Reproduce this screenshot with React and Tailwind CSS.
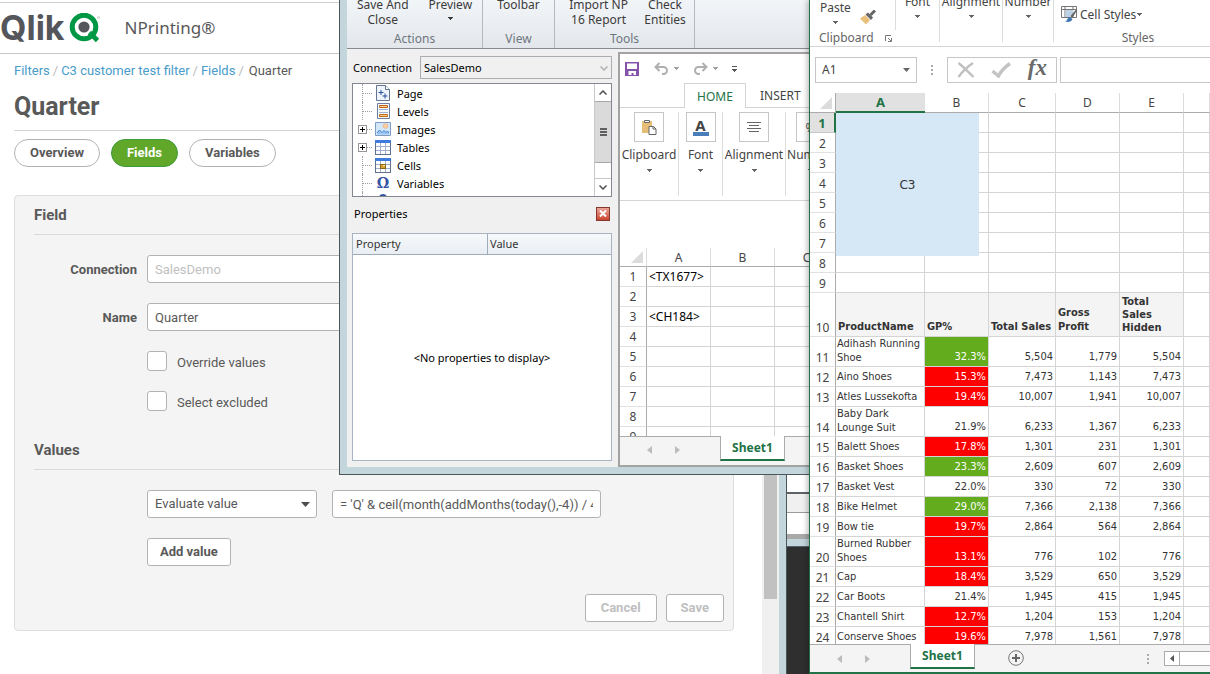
import React from "react";

const win = "font-['Noto_Sans','Open_Sans',sans-serif]";

function Caret({ className = "" }) {
  return (
    <svg viewBox="0 0 5 3" className={`h-[3px] w-[5px] shrink-0 ${className}`} shapeRendering="crispEdges" aria-hidden="true">
      <path d="M0 0h5L2.500 3z" fill="currentColor" />
    </svg>
  );
}

/* ---------------------------------------------------------------- NPrinting */

function QlikMark() {
  return (
    <svg viewBox="0 0 32 30" className="h-[30px] w-8" aria-hidden="true">
      <circle cx="15" cy="14" r="11.800" fill="#fff" stroke="#009845" strokeWidth="5" />
      <path d="M20.500 19.500L28.500 27.500" stroke="#009845" strokeWidth="4.600" />
      <circle cx="15" cy="14" r="5.600" fill="#54565b" />
      <circle cx="29.500" cy="4.500" r="1" fill="none" stroke="#999" strokeWidth="0.500" />
    </svg>
  );
}

const field = "h-7 rounded-[3px] border border-[#b3b3b3] bg-white px-[7px] text-[13px]";
const action = "h-7 rounded-[3px] border border-[#b3b3b3] bg-white text-[13px] font-bold";

function Pill({ active, children }) {
  return (
    <button
      className={`h-7 rounded-full border px-[15px] text-[13px] font-bold ${
        active ? "border-[#3f9a3a] bg-[#61a729] text-white" : "border-[#b3b3b3] bg-white text-[#595959]"
      }`}
    >
      {children}
    </button>
  );
}

function NPrinting() {
  return (
    <section className="absolute inset-y-0 left-0 flex w-[787px] border-r border-[#4d565c] bg-white font-[Roboto,sans-serif] text-[13px] text-[#595959]">
      <div className="mt-[2px] min-w-0 flex-1 border-t border-[#d0d0d0]">
        <header className="flex h-[51px] items-center border-b border-[#c8c8c8]">
          <span className="flex items-center gap-1">
            <span className="font-[Inter,sans-serif] text-[34px] leading-8 font-bold text-[#54565b]">Qlik</span>
            <QlikMark />
          </span>
          <span className="ml-6 font-['Noto_Sans',sans-serif] text-[17px]">NPrinting®</span>
        </header>
        <div className="pr-7 pl-[14px]">
          <nav className="flex h-[34px] items-center gap-[3px] text-[#4a9cc9]">
            <a href="#filters">Filters</a>
            <span className="text-[#bbb]">/</span>
            <a href="#filter">C3 customer test filter</a>
            <span className="text-[#bbb]">/</span>
            <a href="#fields">Fields</a>
            <span className="text-[#bbb]">/</span>
            <span className="ml-[2px] text-[#595959]">Quarter</span>
          </nav>
          <h1 className="flex h-[43px] items-center border-b border-[#d4d4d4] pb-1 text-[25px] font-bold">Quarter</h1>
          <div className="mt-2 flex gap-[11px]">
            <Pill>Overview</Pill>
            <Pill active>Fields</Pill>
            <Pill>Variables</Pill>
          </div>
          <form className="mt-7 h-[436px] rounded-[4px] border border-[#dedede] bg-[#f4f4f4] pr-[9px] pl-[19px]">
            <h2 className="mr-[11px] flex h-[39px] items-center border-b border-[#d9d9d9] text-[15px] font-bold">Field</h2>
            <div className="mt-5 flex items-center gap-[10px]">
              <label htmlFor="conn" className="w-[103px] pt-[2px] text-right font-bold">Connection</label>
              <input id="conn" disabled value="SalesDemo" readOnly className={`${field} w-[454px] text-[#bfbfbf]`} />
            </div>
            <div className="mt-5 flex items-center gap-[10px]">
              <label htmlFor="name" className="w-[103px] pt-[2px] text-right font-bold">Name</label>
              <input id="name" defaultValue="Quarter" className={`${field} w-[454px]`} />
            </div>
            <div className="mt-5 ml-[113px] flex flex-col gap-5">
              <label className="flex h-5 items-center gap-[10px]">
                <input type="checkbox" className="size-5 appearance-none rounded-[3px] border border-[#b3b3b3] bg-white" />
                <span className="pt-[3px]">Override values</span>
              </label>
              <label className="flex h-5 items-center gap-[10px]">
                <input type="checkbox" className="size-5 appearance-none rounded-[3px] border border-[#b3b3b3] bg-white" />
                <span className="pt-[3px]">Select excluded</span>
              </label>
            </div>
            <h2 className="mt-5 mr-[11px] flex h-[39px] items-center border-b border-[#d9d9d9] text-[15px] font-bold">Values</h2>
            <div className="mt-5 ml-[113px] flex gap-[15px]">
              <div className="relative">
                <select aria-label="Value type" className={`${field} w-[170px] appearance-none`}>
                  <option>Evaluate value</option>
                </select>
                <svg viewBox="0 0 9 5" className="pointer-events-none absolute top-3 right-[7px] h-[5px] w-[9px]" aria-hidden="true">
                  <path d="M0 0h9L4.500 5z" fill="#4d4d4d" />
                </svg>
              </div>
              <input aria-label="Expression" defaultValue="= 'Q' & ceil(month(addMonths(today(),-4)) / 4)" className={`${field} w-[269px]`} />
            </div>
            <button type="button" className={`${action} mt-5 ml-[113px] px-3`}>Add value</button>
            <div className="mt-7 flex justify-end gap-[9px] text-[#bfbfbf]">
              <button type="button" disabled className={`${action} px-[15px]`}>Cancel</button>
              <button type="button" disabled className={`${action} px-[14px]`}>Save</button>
            </div>
          </form>
        </div>
      </div>
      <div className="w-[17px] bg-[#f0f0f0] px-[2px]">
        <div className="h-[599px] bg-[#c1c1c1]" />
      </div>
      <div className="w-[7px] bg-[#c3d6dc]" />
    </section>
  );
}

function BackWindow() {
  return (
    <section className="absolute inset-y-0 left-[787px] flex w-6 flex-col bg-[#2f2f2f]" aria-hidden="true">
      <div className="h-[494px] border-b-2 border-[#5d6267] bg-white" />
      <div className="h-[19px] border-b border-[#9a9a9a] bg-[#f0f0f0]" />
      <div className="h-[21px] bg-white" />
      <div className="h-[5px] bg-[#a9a9a9]" />
      <div className="h-2 border-b border-[#55606a] bg-[#c3d6dc]" />
    </section>
  );
}

/* ----------------------------------------------------------------- Designer */

function RibbonGroup({ title, className, children }) {
  return (
    <div className={`flex shrink-0 flex-col justify-end border-r border-[#b4b9be] pb-[2px] text-center ${className}`}>
      <div className="flex items-start justify-around">{children}</div>
      <div className="mt-1 text-[#6e7680]">{title}</div>
    </div>
  );
}

function PageIcon() {
  return (
    <svg viewBox="0 0 14 16" className="h-4 w-[14px]">
      <path d="M.5.5h9l4 4v11H.5z" fill="#eef4fb" stroke="#64748e" />
      <path d="M9.500.5v4h4" fill="#fff" stroke="#64748e" />
      <path d="M5 5v5M2.500 7.500h5M9 8.500v5M6.500 11h5" stroke="#2d4d9d" />
    </svg>
  );
}
function LevelsIcon() {
  return (
    <svg viewBox="0 0 13 16" className="h-4 w-[13px]">
      <path d="M.5.5h12v15H.5z" fill="#f6f9fd" stroke="#6c7fa0" />
      <path d="M2.500 2.500h8v2h-8zM2.500 11.500h8v2h-8z" fill="#ffd28a" stroke="#c0661b" />
      <path d="M2 6.500h9M2 9.500h9" stroke="#9bb0cf" />
    </svg>
  );
}
function ImagesIcon() {
  return (
    <svg viewBox="0 0 16 14" className="h-[14px] w-4">
      <path d="M.5.5h15v13H.5z" fill="#d3e7fa" stroke="#7d9cc4" />
      <circle cx="10.500" cy="4" r="2.300" fill="#ffd2a8" stroke="#f0a36b" strokeWidth=".7" />
      <path d="M2 11l2.500-3 2.500 2.500L9 8.500l2 2 1.500-1.500 1.500 2v1.500H2z" fill="#9cc6ef" />
      <path d="M2 11l2.500-3 2.500 2.500L9 8.500l2 2 1.500-1.500 1.500 2" fill="none" stroke="#3f84cf" />
    </svg>
  );
}
function TableIcon({ cell }) {
  return (
    <svg viewBox="0 0 16 15" className="h-[15px] w-4" shapeRendering="crispEdges">
      <path d="M0 0h16v15H0z" fill="#5f7090" />
      <path d="M1 3h14v11H1z" fill="#fff" />
      <path d="M0 0h16v3H0z" fill="#3f7bdc" />
      <path d="M1 6.500h14M1 10.500h14M5.500 3v11M10.500 3v11" stroke="#9fb0cd" />
      {cell && <path d="M5 6h6v5H5z" fill="#8c6418" />}
      {cell && <path d="M6 7h4v3H6z" fill="#d9a032" />}
      {cell && <path d="M8 7h2v1H8z" fill="#ffe9b0" />}
    </svg>
  );
}

const tree = [
  ["Page", <PageIcon />, false],
  ["Levels", <LevelsIcon />, false],
  ["Images", <ImagesIcon />, true],
  ["Tables", <TableIcon />, true],
  ["Cells", <TableIcon cell />, false],
  ["Variables", <span className="font-['DejaVu_Serif',serif] text-[14px] leading-4 font-bold text-[#3454a4]">Ω</span>, false],
  ["", <span className="mt-[2px] size-2 self-start rounded-full bg-[#3454a4]" />, false],
];

function TreeRow({ label, icon, plus }) {
  return (
    <li className="flex h-[18px] items-center">
      <span className="ml-[5px] flex w-[14px] shrink-0 items-center">
        {plus ? (
          <button aria-label={`Expand ${label}`} className="flex size-[9px] items-center justify-center border border-[#969696] bg-white">
            <svg viewBox="0 0 5 5" className="size-[5px]" shapeRendering="crispEdges"><path d="M2.500 0v5M0 2.500h5" stroke="#000" /></svg>
          </button>
        ) : (
          <span className="ml-1 h-[18px] w-0 border-l border-dotted border-[#a0a0a0]" />
        )}
        <span className="flex-1 border-t border-dotted border-[#a0a0a0]" />
      </span>
      <span className="ml-[3px] flex w-4 items-center justify-center self-stretch">{icon}</span>
      <span className="ml-[6px]">{label}</span>
    </li>
  );
}

function ScrollButton({ up }) {
  return (
    <button aria-label={up ? "Scroll up" : "Scroll down"} className="flex h-[17px] w-4 shrink-0 items-center justify-center border-[#b5b5b5] bg-white">
      <svg viewBox="0 0 8 5" className="h-[5px] w-2"><path d={up ? "M.5 4.500L4 1l3.500 3.500" : "M.5.5L4 4l3.500-3.500"} fill="none" stroke="#505050" strokeWidth="1.500" /></svg>
    </button>
  );
}

function SideTool({ label, className, children }) {
  return (
    <div className={`flex h-[84px] shrink-0 flex-col items-center border-r border-[#dcdcdc] ${className}`}>
      <button aria-label={label} className="flex size-[30px] shrink-0 items-center justify-center border border-[#c6c6c6] bg-white">{children}</button>
      <span className="mt-[5px] leading-4 text-[#444]">{label}</span>
      <Caret className="mt-[6px] text-[#666]" />
    </div>
  );
}

function SheetTabs({ children, className = "" }) {
  return (
    <div className={`flex h-7 shrink-0 items-start border-t border-[#ababab] bg-[#f4f4f4] ${className}`}>
      <div className="flex h-full w-[100px] shrink-0 items-center justify-center gap-[23px] pr-[14px]">
        <svg viewBox="0 0 5 8" className="h-2 w-[5px]"><path d="M5 0v8L0 4z" fill="#bcbcbc" /></svg>
        <svg viewBox="0 0 5 8" className="h-2 w-[5px]"><path d="M0 0v8l5-4z" fill="#bcbcbc" /></svg>
      </div>
      <button className="-mt-px h-[25px] w-[65px] shrink-0 border-x border-b-2 border-x-[#ababab] border-b-[#217346] bg-white text-[12px] leading-5 font-bold text-[#217346]">
        Sheet1
      </button>
      {children}
    </div>
  );
}

const gridLine = "border-r border-b border-[#d4d4d4]";

function DesignerSheet() {
  const text = { 1: "<TX1677>", 3: "<CH184>" };
  return (
    <div className="min-h-0 flex-1 overflow-hidden">
      <table className="w-full table-fixed border-separate border-spacing-0">
        <colgroup>
          <col className="w-[27px]" /><col className="w-16" /><col className="w-16" /><col className="w-16" />
        </colgroup>
        <thead>
          <tr className="h-[19px] text-[#444]">
            <th className="border-r border-b border-r-[#dcdcdc] border-b-[#ababab] p-0 pl-[11px]"><svg viewBox="0 0 12 12" className="size-3"><path d="M12 0v12H0z" fill="#dcdcdc" /></svg></th>
            {["A", "B", "C"].map((c) => (
              <th key={c} className="border-r border-b border-r-[#dcdcdc] border-b-[#ababab] p-0 font-normal">{c}</th>
            ))}
          </tr>
        </thead>
        <tbody>
          {[1, 2, 3, 4, 5, 6, 7, 8, 9].map((n) => (
            <tr key={n} className="h-5">
              <th className="border-r border-b border-r-[#ababab] border-b-[#e1e1e1] p-0 font-normal text-[#444]">{n}</th>
              <td className={`${gridLine} px-[2px] py-0 whitespace-nowrap text-black`}>{text[n]}</td>
              <td className={gridLine} />
              <td className={gridLine} />
            </tr>
          ))}
        </tbody>
      </table>
    </div>
  );
}

function Designer() {
  return (
    <section className={`absolute top-0 left-[339px] flex h-[475px] w-[480px] flex-col border-b border-l border-[#4d565c] text-[12px] leading-[15px] ${win}`}>
      <div className="flex min-h-0 flex-1 flex-col border-b-[7px] border-l-[7px] border-[#c3d6dc] bg-[#f0f0f0]">
        <div className="flex h-[49px] shrink-0 border-b border-[#868b91] bg-linear-to-b from-[#f2f5f8] to-[#e3e7eb] text-[#3b3b3b]">
          <RibbonGroup title="Actions" className="w-[136px]">
            <button>Save And<br />Close</button>
            <button className="flex flex-col items-center">Preview<Caret className="mt-[5px]" /></button>
          </RibbonGroup>
          <RibbonGroup title="View" className="w-[72px]"><button className="pb-[15px]">Toolbar</button></RibbonGroup>
          <RibbonGroup title="Tools" className="w-[140px]">
            <button className="ml-[6px]">Import NP<br />16 Report</button>
            <button>Check<br />Entities</button>
          </RibbonGroup>
        </div>
        <div className="flex min-h-0 flex-1">
          <div className="flex w-[265px] shrink-0 flex-col pl-[5px] text-[11px] text-black">
            <div className="mt-[7px] flex items-center justify-between">
              <label htmlFor="dconn" className="pl-px">Connection</label>
              <div className="relative">
                <select id="dconn" className="h-[23px] w-48 appearance-none border border-[#abadb3] bg-[#f0f0f0] px-[3px]">
                  <option>SalesDemo</option>
                </select>
                <svg viewBox="0 0 8 5" className="pointer-events-none absolute top-[10px] right-1 h-[5px] w-2"><path d="M.5.5L4 4l3.500-3.500" fill="none" stroke="#b0b0b0" strokeWidth="1.500" /></svg>
              </div>
            </div>
            <div className="mt-1 flex h-[114px] justify-between border border-[#828790] bg-white">
              <ul className="min-w-0 flex-1 overflow-hidden">
                {tree.map(([label, icon, plus], i) => <TreeRow key={i} label={label} icon={icon} plus={plus} />)}
              </ul>
              <div className="flex w-[17px] flex-col border-l border-[#c8c8c8]">
                <ScrollButton up />
                <div className="flex h-[62px] flex-col items-center justify-center gap-px border-y border-[#a8a8a8] bg-[#dadada]">
                  <span className="h-[2px] w-[7px] bg-[#606060]" />
                  <span className="h-[2px] w-[7px] bg-[#606060]" />
                  <span className="h-[2px] w-[7px] bg-[#606060]" />
                </div>
                <div className="flex-1 border-b border-[#c8c8c8]" />
                <ScrollButton />
              </div>
            </div>
            <div className="flex h-[36px] items-center justify-between pr-[2px] pb-[3px] pl-[2px]">
              <span>Properties</span>
              <button aria-label="Close properties" className="flex size-[14px] items-center justify-center border border-[#84382c] bg-linear-to-b from-[#e9a497] to-[#c9432c]">
                <svg viewBox="0 0 8 7" className="h-[7px] w-2"><path d="M1 .5l6 6M7 .5l-6 6" stroke="#fff" strokeWidth="2" /></svg>
              </button>
            </div>
            <div className="mb-[6px] flex min-h-0 flex-1 flex-col border border-[#a9b5c2] bg-white">
              <div className="flex h-[21px] shrink-0 items-center border-b border-[#a0abb8] bg-linear-to-b from-[#f7f9fb] to-[#e9eef4] leading-5 text-[#333]">
                <span className="h-full w-[135px] border-r border-[#a0abb8] pl-[3px]">Property</span>
                <span className="h-full pl-[2px]">Value</span>
              </div>
              <div className="flex flex-1 items-center justify-center">&lt;No properties to display&gt;</div>
            </div>
          </div>
          <div className="mt-[3px] ml-[6px] flex min-w-0 flex-1 flex-col border-2 border-[#a3a3a3] bg-[#f4f4f4]">
            <div className="flex min-h-0 flex-1 flex-col bg-white">
              <div className="flex h-[29px] shrink-0 items-center text-[#a0a0a0]">
                <button aria-label="Save" className="ml-[5px]">
                  <svg viewBox="0 0 14 14" className="size-[14px]"><path d="M0 0h14v14H0z" fill="#8653ab" /><path d="M2 1.500h10V7H2zM3.500 9H11v4H8.500v-2h-2v2h-3z" fill="#fff" /></svg>
                </button>
                <button aria-label="Undo" className="ml-[15px]">
                  <svg viewBox="0 0 15 13" className="h-[13px] w-[15px]" fill="none" stroke="#b0b0b0" strokeWidth="2"><path d="M5.500 1L1.500 5l4 4M2 5h7.500a3.500 3.500 0 0 1 0 7H8" /></svg>
                </button>
                <Caret className="ml-[5px]" />
                <button aria-label="Redo" className="ml-[14px]">
                  <svg viewBox="0 0 15 13" className="h-[13px] w-[15px]" fill="none" stroke="#b0b0b0" strokeWidth="2"><path d="M9.500 1l4 4-4 4M13 5H5.500a3.500 3.500 0 0 0 0 7H7" /></svg>
                </button>
                <Caret className="ml-[5px]" />
                <svg viewBox="0 0 5 6" className="ml-[14px] h-[6px] w-[5px]" shapeRendering="crispEdges"><path d="M0 0h5v1H0zM0 3h5L2.500 6z" fill="#555" /></svg>
              </div>
              <div className="flex h-[25px] shrink-0 items-stretch text-[#444]">
                <div className="w-16 shrink-0 border-b border-[#d4d4d4]" />
                <button className="w-[62px] shrink-0 border-x border-t border-[#d4d4d4] text-[#217346]">HOME</button>
                <button className="flex-1 border-b border-[#d4d4d4] pl-[14px] text-left whitespace-nowrap">INSERT</button>
              </div>
              <div className="flex h-[93px] shrink-0 overflow-hidden border-b border-[#d4d4d4] pt-1">
                <SideTool label="Clipboard" className="w-[59px]">
                  <svg viewBox="0 0 16 16" className="size-4">
                    <path d="M1 2h10v12H1z" fill="#e8bd77" />
                    <path d="M3.500 3.500v-2h5v2z" fill="#fff" stroke="#666" />
                    <path d="M8 7.500h4.500l2.500 2.500v5.500H8z" fill="#fff" stroke="#666" /><path d="M12 7.500V10h3" fill="none" stroke="#666" />
                  </svg>
                </SideTool>
                <SideTool label="Font" className="w-11">
                  <span className="w-4 border-b-4 border-[#4a7ebb] text-[15px] leading-[14px] font-bold text-[#444]">A</span>
                </SideTool>
                <SideTool label="Alignment" className="w-[63px]">
                  <svg viewBox="0 0 14 11" className="h-[11px] w-[14px]" shapeRendering="crispEdges"><path d="M0 .5h14M2 3.500h10M0 6.500h14M2 9.500h10" stroke="#666" /></svg>
                </SideTool>
                <SideTool label="Number" className="w-[50px]"><span className="text-[#555]">%</span></SideTool>
              </div>
              <div className="h-[47px] shrink-0" />
              <DesignerSheet />
              <SheetTabs className="pb-px" />
            </div>
            <div className="h-px" />
          </div>
        </div>
      </div>
    </section>
  );
}

/* -------------------------------------------------------------------- Excel */

const rows = [
  ["Adihash Running Shoe", "32.3%", "5,504", "1,779", "5,504", "g", "h-[30px]"],
  ["Aino Shoes", "15.3%", "7,473", "1,143", "7,473", "r", "h-5"],
  ["Atles Lussekofta", "19.4%", "10,007", "1,941", "10,007", "r", "h-5"],
  ["Baby Dark Lounge Suit", "21.9%", "6,233", "1,367", "6,233", "", "h-[30px]"],
  ["Balett Shoes", "17.8%", "1,301", "231", "1,301", "r", "h-5"],
  ["Basket Shoes", "23.3%", "2,609", "607", "2,609", "g", "h-5"],
  ["Basket Vest", "22.0%", "330", "72", "330", "", "h-5"],
  ["Bike Helmet", "29.0%", "7,366", "2,138", "7,366", "g", "h-5"],
  ["Bow tie", "19.7%", "2,864", "564", "2,864", "r", "h-5"],
  ["Burned Rubber Shoes", "13.1%", "776", "102", "776", "r", "h-[30px]"],
  ["Cap", "18.4%", "3,529", "650", "3,529", "r", "h-5"],
  ["Car Boots", "21.4%", "1,945", "415", "1,945", "", "h-5"],
  ["Chantell Shirt", "12.7%", "1,204", "153", "1,204", "r", "h-5"],
  ["Conserve Shoes", "19.6%", "7,978", "1,561", "7,978", "r", "h-5"],
];
const tone = { g: "bg-[#62ac1e] text-white", r: "bg-[#ff0000] text-white", "": "" };
const rowHead = "border-r border-b border-r-[#ababab] border-b-[#e1e1e1] p-0 align-bottom text-[12px] leading-[17px] font-normal text-[#444]";
const num = `${gridLine} pt-0 pr-[2px] pb-[2px] pl-0 text-right align-bottom`;
const head = `${gridLine} bg-[#f4f4f4] px-[2px] pt-0 pb-[2px] text-left align-bottom whitespace-nowrap`;
const headText = "h-[14px]";

function ExcelSheet() {
  return (
    <div className="min-h-0 flex-1 overflow-hidden">
      <table className="w-full table-fixed border-separate border-spacing-0 font-['DejaVu_Sans_Condensed','DejaVu_Sans',sans-serif] text-[11px] leading-[14px] text-[#333]">
        <colgroup>
          <col className="w-[26px]" /><col className="w-[89px]" /><col className="w-16" /><col className="w-[67px]" /><col className="w-16" /><col className="w-16" /><col />
        </colgroup>
        <thead className={`text-[12px] text-[#444] ${win}`}>
          <tr className="h-5">
            <th className="border-r border-b border-[#ababab] p-0 pl-[10px]"><svg viewBox="0 0 12 12" className="size-3"><path d="M12 0v12H0z" fill="#dcdcdc" /></svg></th>
            <th className="border-b-2 border-[#217346] bg-[#e1e1e1] p-0 text-[13px] font-bold text-[#217346]">A</th>
            {["B", "C", "D", "E", ""].map((c) => (
              <th key={c} className="border-r border-b border-r-[#dcdcdc] border-b-[#ababab] p-0 font-normal">{c}</th>
            ))}
          </tr>
        </thead>
        <tbody>
          {[1, 2, 3, 4, 5, 6, 7, 8, 9].map((n) => (
            <tr key={n} className="h-5">
              <th className={n === 1 ? `border-r-2 border-b border-r-[#217346] border-b-[#c8c8c8] bg-[#e1e1e1] p-0 text-[13px] font-bold text-[#217346] ${win}` : `${rowHead} ${win}`}>{n}</th>
              <td className={`${gridLine} relative p-0`}>
                {n === 1 && (
                  <div className="absolute top-0 left-0 z-10 flex size-[143px] items-center justify-center bg-[#d6e7f6] font-['DejaVu_Sans',sans-serif] text-[12px] text-[#333]">C3</div>
                )}
              </td>
              <td className={gridLine} /><td className={gridLine} /><td className={gridLine} /><td className={gridLine} /><td className={gridLine} />
            </tr>
          ))}
          <tr className="h-11 text-[11px]">
            <th className={`${rowHead} ${win}`}>10</th>
            <th className={head}><div className={headText}>ProductName</div></th>
            <th className={head}><div className={headText}>GP%</div></th>
            <th className={head}><div className={headText}>Total Sales</div></th>
            <th className={head}>Gross<br />Profit</th>
            <th className={`${gridLine} bg-[#f4f4f4] px-[2px] pt-0 pb-[2px] text-left align-bottom leading-[13px]`}>Total<br />Sales<br />Hidden</th>
            <td className={gridLine} />
          </tr>
          {rows.map(([name, gp, a, b, c, t, h], i) => (
            <tr key={name} className={h}>
              <th className={`${rowHead} ${win}`}>{i + 11}</th>
              <td className={`${gridLine} px-px py-0 align-bottom`}>
                {h === "h-5" ? (
                  <div className="pb-[2px] whitespace-nowrap">{name}</div>
                ) : (
                  <div className="flex h-[29px] items-start">{name}</div>
                )}
              </td>
              <td className={`${num} ${tone[t]}`}>{gp}</td>
              <td className={num}>{a}</td>
              <td className={num}>{b}</td>
              <td className={num}>{c}</td>
              <td className={gridLine} />
            </tr>
          ))}
        </tbody>
      </table>
    </div>
  );
}

function TopTool({ label, className }) {
  return (
    <div className={`h-[42px] shrink-0 border-r border-[#dcdcdc] ${className}`}>
      <button className="-mt-[6px] flex w-full flex-col items-center">{label}<Caret className="mt-[5px] text-[#666]" /></button>
    </div>
  );
}

function Excel() {
  return (
    <section className={`absolute inset-y-0 right-0 left-[809px] flex flex-col border-b-2 border-l border-[#217346] bg-white text-[12px] leading-4 text-[#444] shadow-[-2px_0_5px_rgba(0,0,0,0.25)] ${win}`}>
      <div className="flex h-[47px] shrink-0 overflow-hidden border-b border-[#d4d4d4]">
        <div className="flex h-[46px] w-[86px] shrink-0 flex-col justify-end">
          <div className="flex h-[34px] items-start border-r border-[#dcdcdc] pl-[10px]">
            <button className="flex flex-col items-center">Paste<Caret className="mt-[5px] text-[#666]" /></button>
            <button aria-label="Format Painter" className="mt-[10px] ml-[9px]">
              <svg viewBox="0 0 16 15" className="h-[15px] w-4">
                <path d="M0 8.500l5-3.500 5 5-4 4.500z" fill="#e8c07c" />
                <path d="M5.500 4.500L8 2.500l5 5-2 2.500z" fill="#666" /><path d="M10.500 5L15 .5" stroke="#666" strokeWidth="3" />
              </svg>
            </button>
          </div>
          <div className="flex items-center justify-between pr-1 pl-[9px] text-[#666]">
            Clipboard
            <svg viewBox="0 0 7 7" className="size-[7px]" fill="none" stroke="#777"><path d="M.5 6V.5H6M3 3l3 3M6.500 3v3.500H3" /></svg>
          </div>
        </div>
        <TopTool label="Font" className="w-11" />
        <TopTool label="Alignment" className="w-[63px]" />
        <TopTool label="Number" className="w-[51px]" />
        <div className="flex min-w-0 flex-1 flex-col pt-[6px]">
          <button className="flex items-center pl-[7px]">
            <svg viewBox="0 0 16 17" className="h-[17px] w-4">
              <path d="M.5.5h15v11H.5z" fill="#fff" stroke="#777" /><path d="M.5 3.500h15M4 .5v11M12 .5v3" stroke="#777" />
              <path d="M4.500 4h8v7h-8z" fill="#bcd0e6" />
              <path d="M15.500 3l-6 7 2 2 4-7z" fill="#666" /><path d="M4 15.500c2 0 2-3 4.500-4.500l3 2c-1 3-4 3.500-7.500 2.500z" fill="#3f78b5" />
            </svg>
            <span className="ml-[3px]">Cell Styles</span>
            <Caret className="ml-px text-[#666]" />
          </button>
          <div className="mt-[7px] pl-3 text-center text-[#666]">Styles</div>
        </div>
      </div>
      <div className="mt-[10px] flex h-[26px] shrink-0 pl-[5px]">
        <div className="flex w-[102px] items-center justify-between border border-[#c6c6c6] pr-[6px]">
          <input aria-label="Name box" defaultValue="A1" className="w-16 pl-[6px]" />
          <svg viewBox="0 0 7 4" className="h-1 w-[7px]"><path d="M0 0h7L3.500 4z" fill="#666" /></svg>
        </div>
        <div className="flex w-[30px] flex-col items-center justify-center gap-[2px]">
          <span className="size-[2px] bg-[#aaa]" /><span className="size-[2px] bg-[#aaa]" /><span className="size-[2px] bg-[#aaa]" />
        </div>
        <div className="flex w-[110px] items-center justify-between border border-[#c6c6c6] px-[9px]">
          <button aria-label="Cancel entry"><svg viewBox="0 0 18 16" className="h-4 w-[18px]"><path d="M1.500 1c5 4 10 9 15 14M16 1C10 5 5 10 1.500 15" fill="none" stroke="#c0c0c0" strokeWidth="2.400" /></svg></button>
          <button aria-label="Enter"><svg viewBox="0 0 20 16" className="h-4 w-5"><path d="M1.500 9l6 5C10 9 14 5 19 1.500" fill="none" stroke="#c4c4c4" strokeWidth="3.400" /></svg></button>
          <button aria-label="Insert function" className="pb-1 font-['Liberation_Serif',serif] text-[23px] leading-5 font-bold text-[#6a6a6a] italic">fx</button>
        </div>
        <input aria-label="Formula bar" className="ml-[3px] min-w-0 flex-1 border border-r-0 border-[#c6c6c6]" />
      </div>
      <div className="h-[10px] shrink-0" />
      <ExcelSheet />
      <SheetTabs>
        <button aria-label="New sheet" className="mt-[5px] ml-[33px]">
          <svg viewBox="0 0 16 16" className="size-4" fill="none"><circle cx="8" cy="8" r="7.300" stroke="#777" /><path d="M8 4v8M4 8h8" stroke="#666" strokeWidth="2" /></svg>
        </button>
        <div className="mt-[9px] ml-auto flex flex-col gap-[2px]">
          <span className="size-[2px] bg-[#aaa]" /><span className="size-[2px] bg-[#aaa]" /><span className="size-[2px] bg-[#aaa]" />
        </div>
        <div className="mt-[6px] ml-[15px] flex h-[15px] w-[46px] border border-r-0 border-[#ababab] bg-white">
          <button aria-label="Scroll left" className="flex w-[15px] items-center justify-center border-r border-[#ababab]">
            <svg viewBox="0 0 4 7" className="h-[7px] w-1"><path d="M4 0v7L0 3.500z" fill="#555" /></svg>
          </button>
        </div>
      </SheetTabs>
    </section>
  );
}

export default function App() {
  return (
    <main className="relative h-screen overflow-hidden bg-[#2f2f2f]">
      <NPrinting />
      <BackWindow />
      <Designer />
      <Excel />
    </main>
  );
}
